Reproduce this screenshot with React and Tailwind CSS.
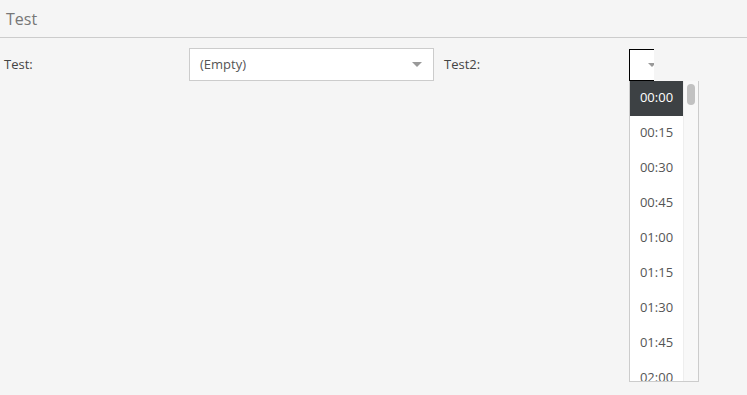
const times = ['00:00', '00:15', '00:30', '00:45', '01:00', '01:15', '01:30', '01:45', '02:00'];

export default function App() {
  return (
    <div className="w-[747px] h-[395px] bg-[#f5f5f5] overflow-hidden" style={{ fontFamily: '"Open Sans", "Noto Sans", sans-serif' }}>
      <div className="h-[38px] border-b border-[#cccccc] pl-[6px] flex items-center">
        <span className="text-[16px] text-[#777777] leading-none">Test</span>
      </div>

      <div className="flex items-center mt-[10px] pl-[4px] text-[13px] text-[#444444]">
        <div className="w-[185px]">Test:</div>
        <div className="w-[245px] h-[33px] bg-white border border-[#cccccc] flex items-center justify-between pl-[10px] pr-[11px]">
          <span className="text-[#555555]">(Empty)</span>
          <span className="w-0 h-0 border-l-[5px] border-r-[5px] border-t-[5px] border-l-transparent border-r-transparent border-t-[#999999]" />
        </div>
        <div className="w-[185px] ml-[10px]">Test2:</div>

        <div className="relative">
          <div className="w-[25px] h-[32px] bg-white border border-black border-r-0 relative overflow-hidden">
            <span className="absolute left-[18px] top-[13px] w-0 h-0 border-l-[4px] border-r-[4px] border-t-[4px] border-l-transparent border-r-transparent border-t-[#999999]" />
          </div>

          <div className="absolute left-0 top-[32px] w-[70px] h-[301px] bg-white border border-[#cccccc] border-t-0 flex overflow-hidden">
            <ul className="w-[53px] shrink-0">
              {times.map((t, i) => (
                <li
                  key={t}
                  className={`h-[35px] flex items-center justify-center text-[13px] ${i === 0 ? 'bg-[#3d4144] text-white' : 'text-[#555555]'}`}
                >
                  {t}
                </li>
              ))}
            </ul>
            <div className="flex-1 bg-[#f8f8f8] border-l border-[#eeeeee] pt-[3px] pl-[3px]">
              <div className="w-[8px] h-[21px] rounded-full bg-[#c1c1c1]" />
            </div>
          </div>
        </div>
      </div>
    </div>
  );
}
